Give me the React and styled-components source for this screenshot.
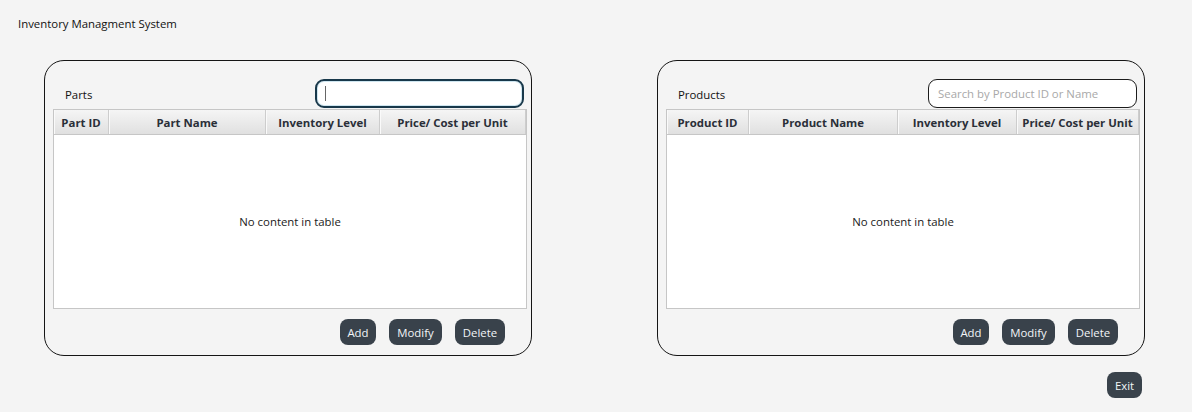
import React from 'react';
import styled, { createGlobalStyle } from 'styled-components';

const GlobalStyle = createGlobalStyle`
  html, body {
    margin: 0;
    padding: 0;
    background: #f4f4f4;
  }
  body {
    font-family: "Open Sans", "Noto Sans", sans-serif;
    font-size: 11.4px;
    color: #1a1a1a;
  }
`;

const Page = styled.div`
  width: 1192px;
  height: 412px;
  box-sizing: border-box;
  padding: 14px 0 0 18px;
`;

const Title = styled.div`
  height: 20px;
  line-height: 20px;
  color: #111;
`;

const Main = styled.div`
  margin: 26px 0 0 26px;
  width: 1101px;
`;

const PanelRow = styled.div`
  display: flex;
  gap: 125px;
`;

const Panel = styled.section`
  width: 488px;
  height: 296px;
  box-sizing: border-box;
  border: 1px solid #151515;
  border-radius: 20px;
  padding: 18px 3px 0 8px;
  display: flex;
  flex-direction: column;
`;

const TopRow = styled.div`
  display: flex;
  align-items: center;
  justify-content: space-between;
  height: 29px;
  padding: 0 4px 0 12px;
`;

const Label = styled.span`
  color: #111;
  margin-top: 1px;
`;

const SearchBox = styled.div`
  width: 209px;
  height: 29px;
  box-sizing: border-box;
  border-radius: 9px;
  background: #fff;
  display: flex;
  align-items: center;
  padding-left: 8px;
  border: ${p => (p.focused ? '2px solid #18384a' : '1px solid #1c1c1c')};
  box-shadow: ${p => (p.focused ? 'inset 0 0 0 1px #cfe6f0' : 'none')};
`;

const Caret = styled.span`
  display: block;
  width: 1px;
  height: 15px;
  background: #666;
`;

const Placeholder = styled.span`
  color: #a8a8a8;
  margin-left: 1px;
`;

const Table = styled.div`
  margin-top: 1px;
  width: 474px;
  height: 200px;
  box-sizing: border-box;
  border: 1px solid #c6c6c6;
  background: #fff;
  display: flex;
  flex-direction: column;
`;

const HeaderRow = styled.div`
  display: flex;
  height: 24px;
  flex-shrink: 0;
  background: linear-gradient(#f5f5f5, #e0e0e0);
  border-bottom: 1px solid #c6c6c6;
`;

const HeaderCell = styled.div`
  flex: 0 0 ${p => p.w}px;
  box-sizing: border-box;
  border-right: 1px solid #cdcdcd;
  box-shadow: inset 1px 0 0 #fafafa;
  display: flex;
  align-items: center;
  justify-content: center;
  font-weight: 700;
  color: #2a2f38;
  white-space: nowrap;
`;

const Body = styled.div`
  flex: 1;
  display: flex;
  align-items: center;
  justify-content: center;
  color: #1a1a1a;
`;

const ButtonRow = styled.div`
  display: flex;
  justify-content: flex-end;
  gap: 13px;
  margin-top: 10px;
  padding-right: 23px;
`;

const Button = styled.button`
  height: 26px;
  width: ${p => p.w}px;
  padding: 0;
  border: none;
  border-radius: 8px;
  background: #39424b;
  color: #f2f5f8;
  font-family: "Open Sans", "Noto Sans", sans-serif;
  font-size: 11.4px;
  cursor: pointer;
`;

const ExitRow = styled.div`
  display: flex;
  justify-content: flex-end;
  padding-right: 3px;
  margin-top: 16px;
`;

const partCols = [
  ['Part ID', 55],
  ['Part Name', 157],
  ['Inventory Level', 114],
  ['Price/ Cost per Unit', 146],
];

const productCols = [
  ['Product ID', 82],
  ['Product Name', 149],
  ['Inventory Level', 119],
  ['Price/ Cost per Unit', 122],
];

const ListPanel = ({ label, columns, placeholder, focused }) => (
  <Panel>
    <TopRow>
      <Label>{label}</Label>
      <SearchBox focused={focused}>
        {focused ? <Caret /> : <Placeholder>{placeholder}</Placeholder>}
      </SearchBox>
    </TopRow>
    <Table>
      <HeaderRow>
        {columns.map(([name, w]) => (
          <HeaderCell key={name} w={w}>
            {name}
          </HeaderCell>
        ))}
      </HeaderRow>
      <Body>No content in table</Body>
    </Table>
    <ButtonRow>
      <Button w={36}>Add</Button>
      <Button w={53}>Modify</Button>
      <Button w={50}>Delete</Button>
    </ButtonRow>
  </Panel>
);

export default function App() {
  return (
    <Page>
      <GlobalStyle />
      <Title>Inventory Managment System</Title>
      <Main>
        <PanelRow>
          <ListPanel label="Parts" columns={partCols} focused />
          <ListPanel
            label="Products"
            columns={productCols}
            placeholder="Search by Product ID or Name"
          />
        </PanelRow>
        <ExitRow>
          <Button w={35}>Exit</Button>
        </ExitRow>
      </Main>
    </Page>
  );
}
